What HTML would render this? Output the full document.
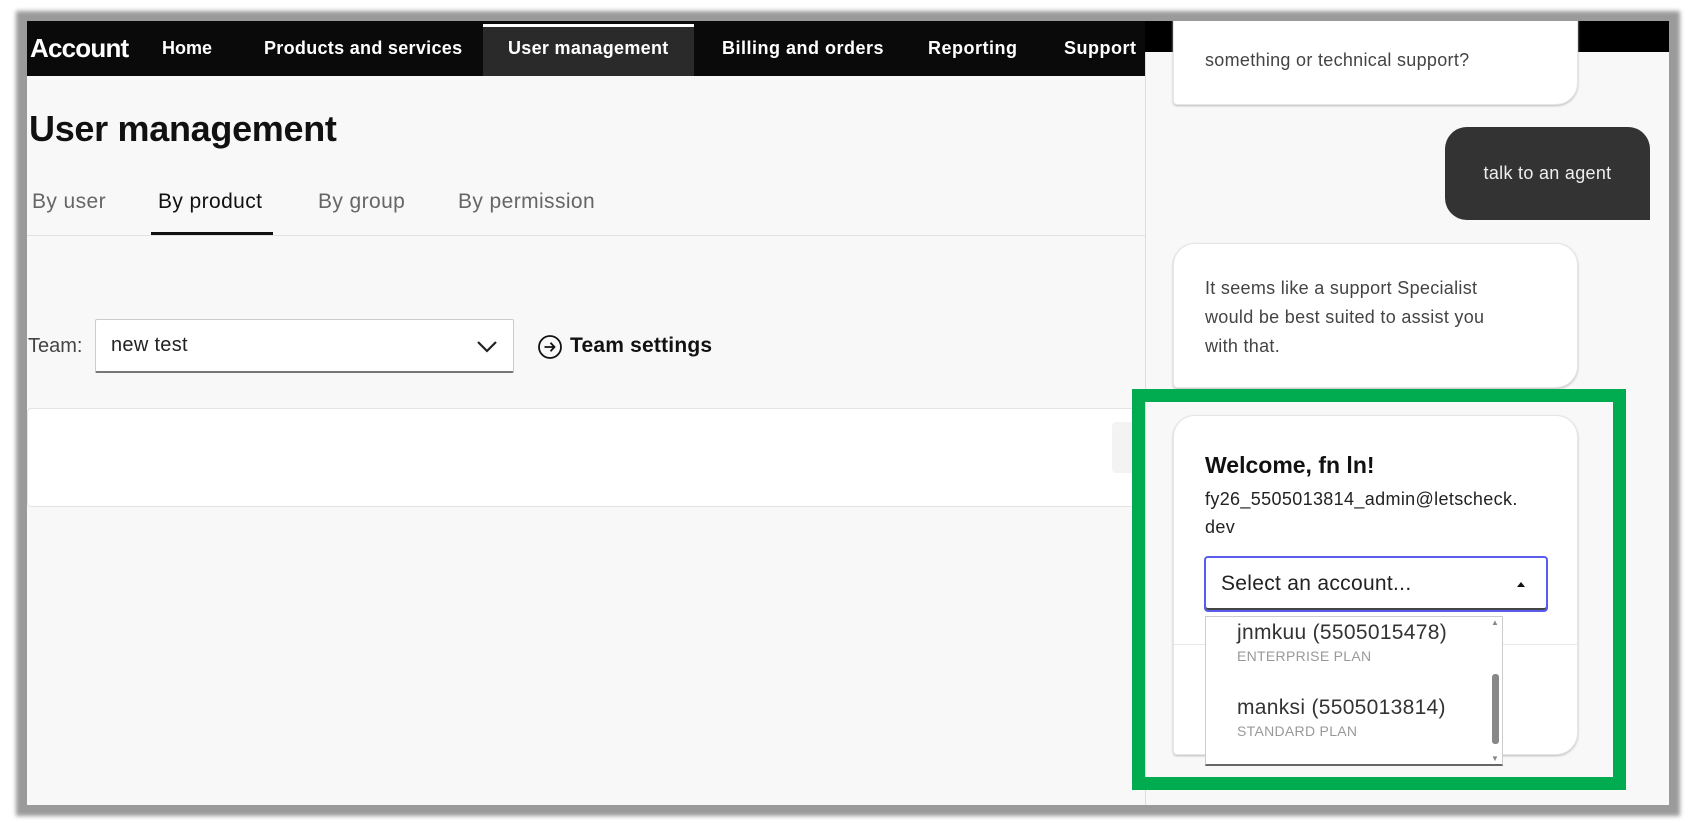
<!DOCTYPE html>
<html><head><meta charset="utf-8"><style>
*{box-sizing:border-box;margin:0;padding:0}
body{width:1694px;height:823px;background:#fff;position:relative;overflow:hidden;font-family:"Liberation Sans",sans-serif}
.frame{position:absolute;left:16px;top:11px;width:1664px;height:805px;background:#9a9a9a;filter:blur(2px)}
.screen{position:absolute;left:27px;top:21px;width:1642px;height:784px;background:#f8f8f8;overflow:hidden}
.nav{position:absolute;left:0;top:0;width:1118px;height:55px;background:#0a0a0a;color:#fff}
.nav span{position:absolute;top:0;line-height:55px;font-size:18px;font-weight:bold;white-space:nowrap}
.topbar{position:absolute;left:1118px;top:0;width:524px;height:31px;background:#000}
.abs{position:absolute;white-space:nowrap}
.bubble{position:absolute;background:#fff;border:1px solid #e6e6e6;border-radius:22px;box-shadow:0 1px 2px #bbb;color:#444;font-size:18px;line-height:29px;letter-spacing:0.3px}
</style></head><body>
<div class="frame"></div>
<div class="screen">
 <div class="nav">
  <div class="abs" style="left:456px;top:3px;width:211px;height:52px;background:#2a2a2a;border-top:3px solid #fff"></div>
  <span style="left:3px;font-size:26px;letter-spacing:-0.8px">Account</span>
  <span style="left:135px">Home</span>
  <span style="left:237px;letter-spacing:0.3px">Products and services</span>
  <span style="left:481px;letter-spacing:0.3px">User management</span>
  <span style="left:695px;letter-spacing:0.5px">Billing and orders</span>
  <span style="left:901px;letter-spacing:0.5px">Reporting</span>
  <span style="left:1037px;letter-spacing:0.5px">Support</span>
 </div>
 <div class="topbar"></div>
 <div class="abs" style="left:2px;top:86px;line-height:44px;font-size:36px;font-weight:bold;color:#111;letter-spacing:-0.3px">User management</div>
 <div class="abs" style="left:5px;top:167px;line-height:28px;font-size:21px;color:#666;letter-spacing:0.4px">By user</div>
 <div class="abs" style="left:131px;top:167px;line-height:28px;font-size:21px;color:#111;letter-spacing:0.4px">By product</div>
 <div class="abs" style="left:291px;top:167px;line-height:28px;font-size:21px;color:#666;letter-spacing:0.4px">By group</div>
 <div class="abs" style="left:431px;top:167px;line-height:28px;font-size:21px;color:#666;letter-spacing:0.4px">By permission</div>
 <div class="abs" style="left:0;top:214px;width:1118px;height:1px;background:#e2e2e2"></div>
 <div class="abs" style="left:124px;top:211px;width:122px;height:3px;background:#111"></div>
 <div class="abs" style="left:1px;top:312px;line-height:26px;font-size:20px;color:#444">Team:</div>
 <div class="abs" style="left:68px;top:298px;width:419px;height:54px;background:#fff;border:1px solid #ccc;border-bottom:2px solid #777;border-radius:2px"></div>
 <div class="abs" style="left:84px;top:311px;line-height:26px;font-size:20px;color:#222;letter-spacing:0.3px">new test</div>
 <svg class="abs" style="left:449px;top:318px" width="22" height="14"><path d="M2 3 L11 12 L20 3" stroke="#222" stroke-width="2.2" fill="none"/></svg>
 <svg class="abs" style="left:510px;top:313px" width="26" height="26"><circle cx="13" cy="13" r="11" stroke="#111" stroke-width="1.8" fill="none"/><path d="M7.5 13 H17.5 M13.5 8.8 L17.5 13 L13.5 17.2" stroke="#111" stroke-width="1.8" fill="none"/></svg>
 <div class="abs" style="left:543px;top:311px;line-height:28px;font-size:21px;font-weight:bold;color:#111;letter-spacing:0.2px">Team settings</div>
 <div class="abs" style="left:0;top:387px;width:1118px;height:99px;background:#fff;border:1px solid #e4e4e4;border-radius:4px"></div>
 <div class="abs" style="left:1085px;top:401px;width:33px;height:51px;background:#f3f3f3;border-radius:4px"></div>
 <div class="abs" style="left:1118px;top:31px;width:524px;height:753px;background:#f8f8f8;border-left:1px solid #ddd"></div>
 <div class="bubble" style="left:1146px;top:-30px;width:405px;height:114px;border-bottom-left-radius:4px"><div style="position:absolute;left:31px;top:54px">something or technical support?</div></div>
 <div class="abs" style="left:1418px;top:106px;width:205px;height:93px;background:#333;border-radius:22px 22px 0 22px;color:#eee;font-size:18px;line-height:93px;text-align:center;letter-spacing:0.3px">talk to an agent</div>
 <div class="bubble" style="left:1146px;top:222px;width:405px;height:145px;border-bottom-left-radius:4px"><div style="position:absolute;left:31px;top:30px;width:305px;white-space:normal">It seems like a support Specialist would be best suited to assist you with that.</div></div>
 <div class="abs" style="left:1105px;top:368px;width:494px;height:401px;border:13px solid #00ac4f"></div>
 <div class="bubble" style="left:1146px;top:394px;width:405px;height:340px;border-bottom-left-radius:4px">
  <div style="position:absolute;left:0;top:228px;width:100%;height:1px;background:#e8e8e8"></div>
 </div>
 <div class="abs" style="left:1178px;top:429px;line-height:30px;font-size:23px;font-weight:bold;color:#111">Welcome, fn ln!</div>
 <div class="abs" style="left:1178px;top:464px;font-size:18px;color:#222;line-height:28px;letter-spacing:0.35px">fy26_5505013814_admin@letscheck.<br>dev</div>
 <div class="abs" style="left:1177px;top:535px;width:344px;height:56px;background:#fff;border:2px solid #5b5bf0;border-radius:4px;box-shadow:inset 0 -2px 0 #444"></div>
 <div class="abs" style="left:1194px;top:549px;line-height:28px;font-size:21px;color:#222;letter-spacing:0.3px">Select an account...</div>
 <div class="abs" style="left:1490px;top:561px;width:0;height:0;border-left:4px solid transparent;border-right:4px solid transparent;border-bottom:5px solid #111"></div>
 <div class="abs" style="left:1178px;top:595px;width:298px;height:150px;background:#fff;border:1px solid #ccc;border-bottom:2px solid #666"></div>
 <div class="abs" style="left:1465px;top:653px;width:7px;height:70px;background:#888;border-radius:3px"></div>
 <div class="abs" style="left:1464px;top:597px;font-size:8px;color:#888">▲</div>
 <div class="abs" style="left:1464px;top:733px;font-size:8px;color:#888">▼</div>
 <div class="abs" style="left:1210px;top:598px;line-height:28px;font-size:21px;color:#333;letter-spacing:0.3px">jnmkuu (5505015478)</div>
 <div class="abs" style="left:1210px;top:626px;line-height:18px;font-size:14px;color:#999;letter-spacing:0.3px">ENTERPRISE PLAN</div>
 <div class="abs" style="left:1210px;top:673px;line-height:28px;font-size:21px;color:#333;letter-spacing:0.3px">manksi (5505013814)</div>
 <div class="abs" style="left:1210px;top:701px;line-height:18px;font-size:14px;color:#999;letter-spacing:0.3px">STANDARD PLAN</div>
</div>
</body></html>
